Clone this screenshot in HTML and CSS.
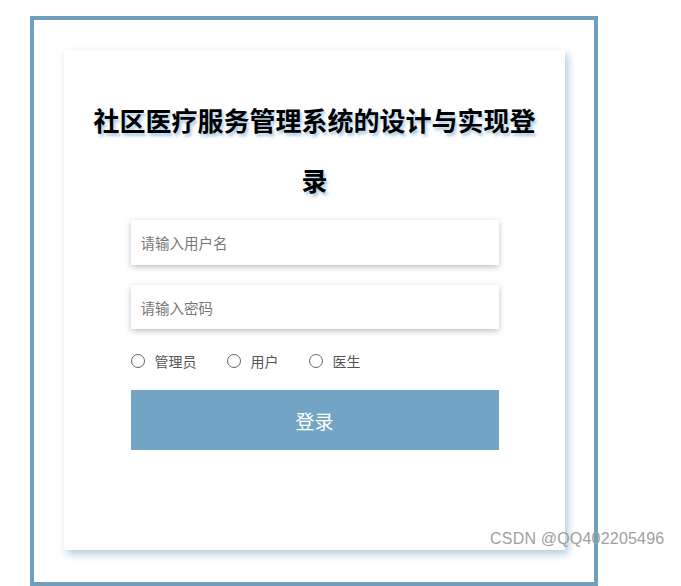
FILE: index.html
```html
<!DOCTYPE html>
<html lang="zh">
<head>
<meta charset="utf-8">
<title>登录</title>
<link rel="stylesheet" href="styles.css">
</head>
<body>
<div class="frame">
  <div class="card">
    <h1 class="title">社区医疗服务管理系统的设计与实现登录</h1>
    <form class="form">
      <input class="field" type="text" placeholder="请输入用户名">
      <input class="field" type="password" placeholder="请输入密码">
      <div class="roles">
        <label class="role"><span class="dot"></span>管理员</label>
        <label class="role"><span class="dot"></span>用户</label>
        <label class="role"><span class="dot"></span>医生</label>
      </div>
      <button class="btn" type="button">登录</button>
    </form>
  </div>
</div>
<div class="mark">CSDN @QQ402205496</div>
</body>
</html>
```
FILE: styles.css
```css
html, body {
  margin: 0;
  padding: 0;
  background: #fff;
  overflow: hidden;
}
body {
  font-family: "Noto Sans CJK SC", "Noto Sans", sans-serif;
  position: relative;
  height: 586px;
}
.frame {
  margin: 16px 0 0 30px;
  width: 568px;
  height: 570px;
  border: 4px solid #6f9fbd;
  padding: 30px 0 0 30px;
  box-sizing: border-box;
}
.card {
  width: 501px;
  height: 500px;
  background: #fff;
  box-shadow: 3px 4px 8px rgba(110, 160, 195, 0.55);
  padding-top: 40px;
  box-sizing: border-box;
}
.title {
  margin: 0 0 10px;
  font-size: 26px;
  line-height: 60px;
  font-weight: 700;
  color: #000;
  text-align: center;
  padding: 0 23px;
  text-shadow: 2px 3px 3px rgba(120, 170, 210, 0.6);
}
.form {
  width: 368px;
  margin: 0 auto;
  display: flex;
  flex-direction: column;
}
.field {
  height: 45px;
  border: none;
  outline: none;
  padding: 0 10px;
  font-family: inherit;
  font-size: 14.5px;
  color: #333;
  background: #fff;
  box-shadow: 0 2px 6px rgba(0, 0, 0, 0.25);
  margin-bottom: 20px;
}
.field::placeholder {
  color: #777;
}
.field + .field {
  height: 44px;
  margin-bottom: 23px;
}
.roles {
  display: flex;
  align-items: center;
  height: 18px;
  font-size: 14px;
  color: #555;
  margin-bottom: 20px;
}
.role {
  display: flex;
  align-items: center;
  margin-right: 30px;
}
.dot {
  width: 12px;
  height: 12px;
  border: 1px solid #666;
  border-radius: 50%;
  margin-right: 10px;
}
.btn {
  height: 60px;
  border: none;
  background: #72a5c3;
  color: #fff;
  font-family: inherit;
  font-size: 19px;
}
.mark {
  position: absolute;
  left: 490px;
  top: 530px;
  font-family: "Liberation Sans", Arial, sans-serif;
  font-size: 16px;
  color: #a0a0a0;
  letter-spacing: 0.2px;
}
```
